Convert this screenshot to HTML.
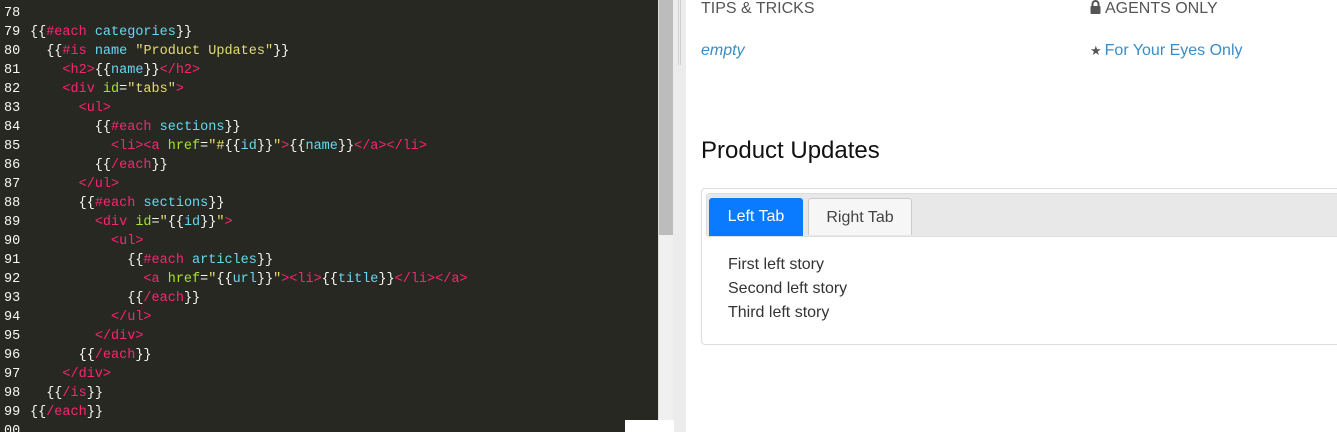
<!DOCTYPE html>
<html><head><meta charset="utf-8"><style>
html,body{margin:0;padding:0;width:1337px;height:432px;overflow:hidden;background:#fff;position:relative}
#ed{position:absolute;left:0;top:0;width:658px;height:432px;background:#272822;font-family:"Liberation Mono",monospace;font-size:13.5px;color:#f8f8f2}
.l{position:absolute;left:4px;height:19px;line-height:19px;white-space:pre;margin-top:2px}
.n{color:#f8f8f2;display:inline-block;width:26px}
.t{color:#f92672}.c{color:#66d9ef}.a{color:#a6e22e}.s{color:#e6db74}.w{color:#f8f8f2}
#sb{position:absolute;left:658px;top:0;width:14px;height:432px;background:#f0f0f0;border-left:1px solid #ddd}
#th{position:absolute;left:659px;top:0;width:14px;height:235px;background:#bcbcbc}
#gut{position:absolute;left:673px;top:0;width:13px;height:432px;background:#ececec}
.vl{position:absolute;top:0;height:65px;width:1px;background:#d0d0d0}
#wb{position:absolute;left:625px;top:420px;width:49px;height:12px;background:#fff}
.r{position:absolute;font-family:"Liberation Sans",sans-serif;white-space:nowrap}
</style></head><body>
<div id="ed">
<div class="l" style="top:2px"><span class="n">78</span></div>
<div class="l" style="top:21px"><span class="n">79</span>{{<span class="t">#each</span> <span class="c">categories</span>}}</div>
<div class="l" style="top:40px"><span class="n">80</span>  {{<span class="t">#is</span> <span class="c">name</span> <span class="s">"Product Updates"</span>}}</div>
<div class="l" style="top:59px"><span class="n">81</span>    <span class="t">&lt;h2&gt;</span>{{<span class="c">name</span>}}<span class="t">&lt;/h2&gt;</span></div>
<div class="l" style="top:78px"><span class="n">82</span>    <span class="t">&lt;div</span> <span class="a">id</span>=<span class="s">"tabs"</span><span class="t">&gt;</span></div>
<div class="l" style="top:97px"><span class="n">83</span>      <span class="t">&lt;ul&gt;</span></div>
<div class="l" style="top:116px"><span class="n">84</span>        {{<span class="t">#each</span> <span class="c">sections</span>}}</div>
<div class="l" style="top:135px"><span class="n">85</span>          <span class="t">&lt;li&gt;&lt;a</span> <span class="a">href</span>=<span class="s">"#</span>{{<span class="c">id</span>}}<span class="s">"</span><span class="t">&gt;</span>{{<span class="c">name</span>}}<span class="t">&lt;/a&gt;&lt;/li&gt;</span></div>
<div class="l" style="top:154px"><span class="n">86</span>        {{<span class="t">/each</span>}}</div>
<div class="l" style="top:173px"><span class="n">87</span>      <span class="t">&lt;/ul&gt;</span></div>
<div class="l" style="top:192px"><span class="n">88</span>      {{<span class="t">#each</span> <span class="c">sections</span>}}</div>
<div class="l" style="top:211px"><span class="n">89</span>        <span class="t">&lt;div</span> <span class="a">id</span>=<span class="s">"</span>{{<span class="c">id</span>}}<span class="s">"</span><span class="t">&gt;</span></div>
<div class="l" style="top:230px"><span class="n">90</span>          <span class="t">&lt;ul&gt;</span></div>
<div class="l" style="top:249px"><span class="n">91</span>            {{<span class="t">#each</span> <span class="c">articles</span>}}</div>
<div class="l" style="top:268px"><span class="n">92</span>              <span class="t">&lt;a</span> <span class="a">href</span>=<span class="s">"</span>{{<span class="c">url</span>}}<span class="s">"</span><span class="t">&gt;&lt;li&gt;</span>{{<span class="c">title</span>}}<span class="t">&lt;/li&gt;&lt;/a&gt;</span></div>
<div class="l" style="top:287px"><span class="n">93</span>            {{<span class="t">/each</span>}}</div>
<div class="l" style="top:306px"><span class="n">94</span>          <span class="t">&lt;/ul&gt;</span></div>
<div class="l" style="top:325px"><span class="n">95</span>        <span class="t">&lt;/div&gt;</span></div>
<div class="l" style="top:344px"><span class="n">96</span>      {{<span class="t">/each</span>}}</div>
<div class="l" style="top:363px"><span class="n">97</span>    <span class="t">&lt;/div&gt;</span></div>
<div class="l" style="top:382px"><span class="n">98</span>  {{<span class="t">/is</span>}}</div>
<div class="l" style="top:401px"><span class="n">99</span>{{<span class="t">/each</span>}}</div>
<div class="l" style="top:420px"><span class="n">00</span></div>
</div>
<div id="sb"></div><div id="th"></div>
<div id="gut"><div class="vl" style="left:5px"></div><div class="vl" style="left:7px"></div></div>
<div id="wb"></div>

<div class="r" style="left:701px;top:0px;font-size:16px;color:#555">TIPS &amp; TRICKS</div>
<div class="r" style="left:1090px;top:0px;font-size:16px;color:#555"><svg width="11" height="14" viewBox="0 0 11 14" style="vertical-align:-1px;margin-right:4px"><path d="M2.5 6V4a3 3 0 0 1 6 0v2" stroke="#555" stroke-width="2" fill="none"/><rect x="0.5" y="6" width="10" height="8" rx="1" fill="#555"/></svg>AGENTS ONLY</div>
<div class="r" style="left:701px;top:42px;font-size:16px;color:#3a8cc8;font-style:italic">empty</div>
<div class="r" style="left:1090px;top:42px;font-size:16px;color:#3a8cc8"><span style="color:#555;font-size:13px;margin-right:3px">★</span>For Your Eyes Only</div>
<div class="r" style="left:701px;top:137px;font-size:24px;color:#111">Product Updates</div>

<div style="position:absolute;left:701px;top:188px;width:650px;height:155px;border:1px solid #ddd;border-radius:4px"></div>
<div style="position:absolute;left:706px;top:193px;width:640px;height:42px;background:#e8e8e8;border:1px solid #ddd;border-radius:3px"></div>
<div class="r" style="left:709px;top:198px;width:94px;height:38px;background:#0a7bff;color:#fff;font-size:16px;line-height:38px;text-align:center;border-radius:3px 3px 0 0">Left Tab</div>
<div class="r" style="left:808px;top:198px;width:102px;height:36px;background:#f6f6f6;border:1px solid #ccc;border-bottom:none;color:#444;font-size:16px;line-height:38px;text-align:center;border-radius:3px 3px 0 0">Right Tab</div>
<div class="r" style="left:728px;top:253px;font-size:16px;color:#333;line-height:24px">First left story<br>Second left story<br>Third left story</div>
</body></html>
